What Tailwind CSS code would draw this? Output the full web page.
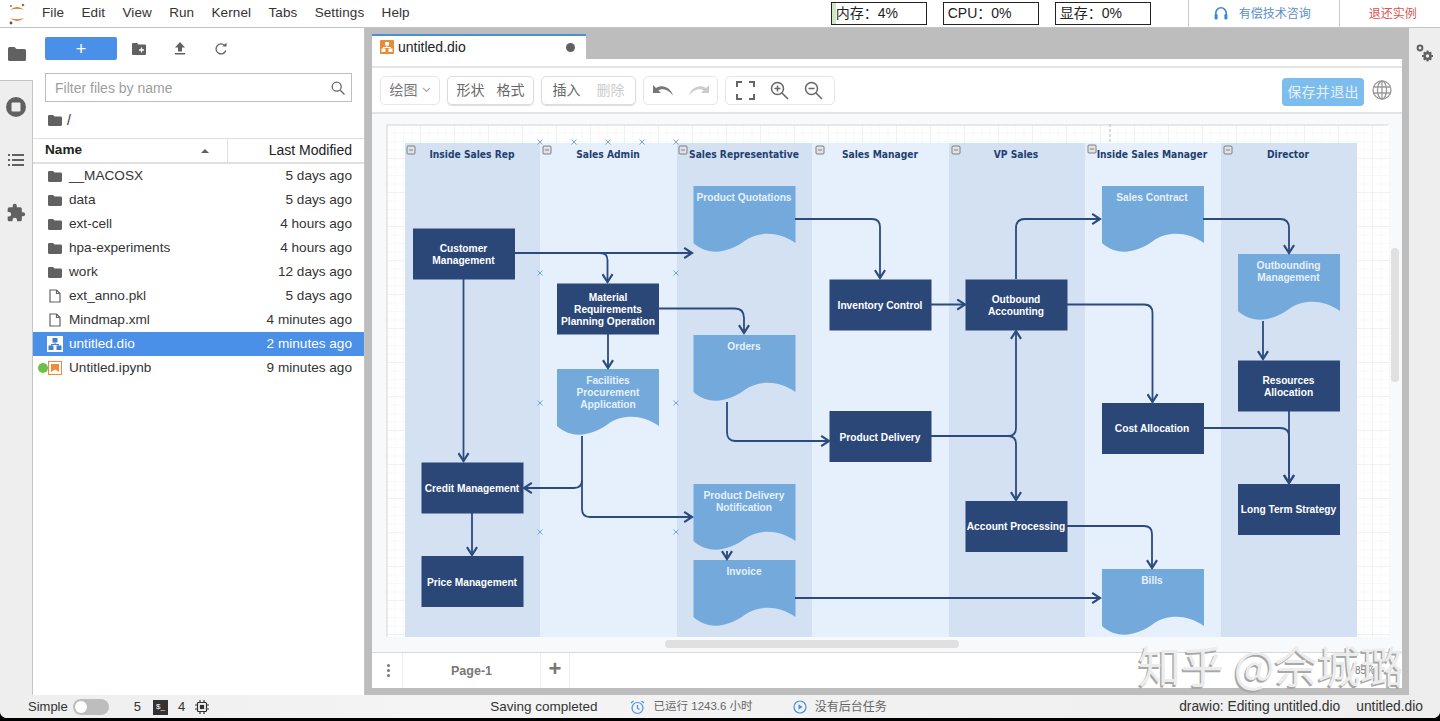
<!DOCTYPE html>
<html lang="en">
<head>
  <meta charset="UTF-8">
  <title>JupyterLab - untitled.dio</title>
  <script src="https://cdn.jsdelivr.net/npm/@tailwindcss/browser@4"></script>
</head>
<body class="bg-black">
<div class="w-[1440px] h-[718px] rounded-b-[7px] overflow-hidden relative flex flex-col bg-[#eeeeee] text-[#333] [font-family:'Liberation_Sans','Noto_Sans_CJK_SC',sans-serif]">

  <!-- top bar -->
  <header class="h-[28px] shrink-0 flex items-center bg-white border-b border-[#c4c4c4]">
    <div class="w-[33px] flex justify-center">
      <svg width="20" height="24" viewBox="0 0 20 24">
        <path d="M3 8 Q10 2 17 8 Q10 5.5 3 8Z" fill="#e8762b"/>
        <path d="M3 16 Q10 22 17 16 Q10 18.5 3 16Z" fill="#e8762b"/>
        <circle cx="16" cy="3" r="1.3" fill="#777"/><circle cx="4" cy="4" r="1" fill="#777"/><circle cx="4" cy="21" r="1.4" fill="#555"/>
      </svg>
    </div>
    <nav class="ml-[9px] flex gap-[17.3px] text-[13.5px] tracking-[0.1px]">
      <span>File</span><span>Edit</span><span>View</span><span>Run</span><span>Kernel</span><span>Tabs</span><span>Settings</span><span>Help</span>
    </nav>
    <div class="ml-[421px] flex gap-[16px] text-[14px] text-[#222]">
      <div class="w-[96px] h-[23px] border border-[#222] flex items-center bg-[linear-gradient(90deg,#cfe6c8_4%,#ffffff_4%)] pl-[4px]">内存：4%</div>
      <div class="w-[96px] h-[23px] border border-[#222] flex items-center pl-[4px]">CPU：0%</div>
      <div class="w-[96px] h-[23px] border border-[#222] flex items-center pl-[4px]">显存：0%</div>
    </div>
    <div class="ml-[37px] w-[152px] h-full border-l border-r border-[#ccc] flex items-center text-[12px] text-[#5b8fc9] pl-[25px] gap-[11px]">
      <svg width="14" height="15" viewBox="0 0 14 15" fill="none"><path d="M1.8 9V7a5.2 5.2 0 0 1 10.4 0v2" stroke="#3d86d8" stroke-width="1.6"/><rect x="0.6" y="8" width="3" height="5.5" rx="1.2" fill="#3d86d8"/><rect x="10.4" y="8" width="3" height="5.5" rx="1.2" fill="#3d86d8"/></svg>
      <span>有偿技术咨询</span>
    </div>
    <div class="flex-1 flex justify-center text-[12px] text-[#d9534f] pl-[6px]">退还实例</div>
  </header>

  <div class="flex-1 flex min-h-0">
    <!-- left icon rail -->
    <aside class="w-[33px] shrink-0 flex flex-col items-center">
      <div class="w-[33px] h-[52px] bg-white flex items-center justify-center">
        <svg width="18" height="14" viewBox="0 0 18 14"><path d="M0 1.5A1.5 1.5 0 0 1 1.5 0h5l2 2h8A1.5 1.5 0 0 1 18 3.5v9a1.5 1.5 0 0 1-1.5 1.5h-15A1.5 1.5 0 0 1 0 12.500Z" fill="#616161"/></svg>
      </div>
      <div class="w-[33px] flex-1 border-r border-[#c4c4c4] border-t flex flex-col items-center pt-[16px] gap-[36px]">
        <svg width="20" height="20" viewBox="0 0 20 20"><circle cx="10" cy="10" r="10" fill="#616161"/><rect x="5.500" y="5.500" width="9" height="9" rx="1" fill="#eee"/></svg>
        <svg width="16" height="14" viewBox="0 0 16 14" fill="#616161"><rect x="0" y="1" width="2" height="2"/><rect x="4" y="1" width="12" height="2"/><rect x="0" y="6" width="2" height="2"/><rect x="4" y="6" width="12" height="2"/><rect x="0" y="11" width="2" height="2"/><rect x="4" y="11" width="12" height="2"/></svg>
        <svg width="20" height="20" viewBox="0 0 24 24" fill="#616161"><path d="M20.500 11H19V7a2 2 0 0 0-2-2h-4V3.500a2.500 2.500 0 0 0-5 0V5H4a2 2 0 0 0-2 2v3.800h1.500a2.700 2.700 0 0 1 0 5.400H2V20a2 2 0 0 0 2 2h3.800v-1.500a2.700 2.700 0 0 1 5.400 0V22H17a2 2 0 0 0 2-2v-4h1.500a2.500 2.500 0 0 0 0-5Z"/></svg>
      </div>
    </aside>

    <!-- file browser -->
    <section class="w-[331px] shrink-0 bg-white flex flex-col text-[13.6px]">
      <div class="h-[32px] flex items-end pl-[12px]">
        <button class="w-[72px] h-[23px] rounded-[2px] bg-[#4a90e8] text-white text-[18px] leading-none flex items-center justify-center">+</button>
        <div class="h-[23px] flex items-center ml-[15px] gap-[28px]">
          <svg width="14" height="12" viewBox="0 0 14 12"><path d="M0 1a1 1 0 0 1 1-1h4l1.500 1.500H13a1 1 0 0 1 1 1V11a1 1 0 0 1-1 1H1a1 1 0 0 1-1-1Z" fill="#616161"/><path d="M9.500 4.500v5M7 7h5" stroke="#fff" stroke-width="1.300"/></svg>
          <svg width="12" height="13" viewBox="0 0 12 13" fill="#616161"><path d="M6 0 11 5.500H8V9.500H4V5.500H1Z"/><rect x="1" y="11" width="10" height="1.500"/></svg>
          <svg width="14" height="14" viewBox="0 0 14 14" fill="none"><path d="M11.800 8.500A5 5 0 1 1 10.500 3.300" stroke="#616161" stroke-width="1.300"/><path d="M8.500 4.500h4v-4Z" fill="#616161"/></svg>
        </div>
      </div>
      <div class="ml-[12px] mt-[13px] w-[307px] h-[29px] border border-[#bdbdbd] flex items-center justify-between pl-[9px] pr-[6px] pt-[1px] text-[14px] text-[#9e9e9e]">
        <span>Filter files by name</span>
        <svg width="14" height="14" viewBox="0 0 14 14" fill="none" stroke="#666" stroke-width="1.300"><circle cx="5.700" cy="5.700" r="4.500"/><path d="M9 9l4.500 4.500"/></svg>
      </div>
      <div class="h-[36px] flex items-center pl-[15px] gap-[5px] text-[14px]">
        <svg width="14" height="11" viewBox="0 0 18 14"><path d="M0 1.500A1.500 1.500 0 0 1 1.500 0h5l2 2h8A1.500 1.500 0 0 1 18 3.500v9a1.500 1.500 0 0 1-1.500 1.500h-15A1.500 1.500 0 0 1 0 12.500Z" fill="#616161"/></svg>
        <span>/</span>
      </div>
      <div class="h-[26px] flex border-t border-b-2 border-[#e0e0e0] font-bold text-[#222]">
        <div class="w-[195px] pl-[12px] pr-[18px] flex items-center justify-between border-r border-[#e0e0e0]">
          <span>Name</span>
          <span class="w-0 h-0 border-l-[4px] border-r-[4px] border-b-[4px] border-l-transparent border-r-transparent border-b-[#616161]"></span>
        </div>
        <div class="flex-1 flex items-center justify-end pr-[12px] font-normal text-[14px]">Last Modified</div>
      </div>

      <div class="flex items-center h-[24px] pr-[12px] pl-[15px]">
        <svg class="mr-[7px]" width="14" height="11" viewBox="0 0 18 14"><path d="M0 1.500A1.500 1.500 0 0 1 1.500 0h5l2 2h8A1.500 1.500 0 0 1 18 3.500v9a1.500 1.500 0 0 1-1.500 1.500h-15A1.500 1.500 0 0 1 0 12.500Z" fill="#616161"/></svg>
        <span class="flex-1">__MACOSX</span><span>5 days ago</span>
      </div>
      <div class="flex items-center h-[24px] pr-[12px] pl-[15px]">
        <svg class="mr-[7px]" width="14" height="11" viewBox="0 0 18 14"><path d="M0 1.500A1.500 1.500 0 0 1 1.500 0h5l2 2h8A1.500 1.500 0 0 1 18 3.500v9a1.500 1.500 0 0 1-1.500 1.500h-15A1.500 1.500 0 0 1 0 12.500Z" fill="#616161"/></svg>
        <span class="flex-1">data</span><span>5 days ago</span>
      </div>
      <div class="flex items-center h-[24px] pr-[12px] pl-[15px]">
        <svg class="mr-[7px]" width="14" height="11" viewBox="0 0 18 14"><path d="M0 1.500A1.500 1.500 0 0 1 1.500 0h5l2 2h8A1.500 1.500 0 0 1 18 3.500v9a1.500 1.500 0 0 1-1.500 1.500h-15A1.500 1.500 0 0 1 0 12.500Z" fill="#616161"/></svg>
        <span class="flex-1">ext-cell</span><span>4 hours ago</span>
      </div>
      <div class="flex items-center h-[24px] pr-[12px] pl-[15px]">
        <svg class="mr-[7px]" width="14" height="11" viewBox="0 0 18 14"><path d="M0 1.500A1.500 1.500 0 0 1 1.500 0h5l2 2h8A1.500 1.500 0 0 1 18 3.500v9a1.500 1.500 0 0 1-1.500 1.500h-15A1.500 1.500 0 0 1 0 12.500Z" fill="#616161"/></svg>
        <span class="flex-1">hpa-experiments</span><span>4 hours ago</span>
      </div>
      <div class="flex items-center h-[24px] pr-[12px] pl-[15px]">
        <svg class="mr-[7px]" width="14" height="11" viewBox="0 0 18 14"><path d="M0 1.500A1.500 1.500 0 0 1 1.500 0h5l2 2h8A1.500 1.500 0 0 1 18 3.500v9a1.500 1.500 0 0 1-1.500 1.500h-15A1.500 1.500 0 0 1 0 12.500Z" fill="#616161"/></svg>
        <span class="flex-1">work</span><span>12 days ago</span>
      </div>
      <div class="flex items-center h-[24px] pr-[12px] pl-[16px]">
        <svg class="mr-[8px]" width="12" height="14" viewBox="0 0 12 14" fill="none" stroke="#616161" stroke-width="1.200"><path d="M1 1h6.500L11 4.500V13H1Z"/><path d="M7.500 1v3.500H11"/></svg>
        <span class="flex-1">ext_anno.pkl</span><span>5 days ago</span>
      </div>
      <div class="flex items-center h-[24px] pr-[12px] pl-[16px]">
        <svg class="mr-[8px]" width="12" height="14" viewBox="0 0 12 14" fill="none" stroke="#616161" stroke-width="1.200"><path d="M1 1h6.500L11 4.500V13H1Z"/><path d="M7.500 1v3.500H11"/></svg>
        <span class="flex-1">Mindmap.xml</span><span>4 minutes ago</span>
      </div>
      <div class="flex items-center h-[24px] pr-[12px] pl-[14px] bg-[#4a90e8] text-white">
        <svg class="mr-[6px]" width="16" height="16" viewBox="0 0 16 16"><rect width="16" height="16" fill="#fff"/><g fill="#3f7fd0"><rect x="5.500" y="2" width="5" height="4.500"/><rect x="1.500" y="9.500" width="5" height="4.500"/><rect x="9.500" y="9.500" width="5" height="4.500"/><path d="M7.500 6.500h1V8H12v1.500h-1V9H5v.500H4V8h3.500Z"/></g></svg>
        <span class="flex-1">untitled.dio</span><span>2 minutes ago</span>
      </div>
      <div class="flex items-center h-[24px] pr-[12px] pl-[5px]">
        <span class="w-[10px] h-[10px] rounded-full bg-[#6cc04a]"></span>
        <svg class="mr-[7px]" width="14" height="14" viewBox="0 0 14 14"><rect x="0.500" y="0.500" width="13" height="13" fill="#fff" stroke="#ef8c3c"/><path d="M3 3h8v8L7 8.500 3 11Z" fill="#ef8c3c"/></svg>
        <span class="flex-1">Untitled.ipynb</span><span>9 minutes ago</span>
      </div>
    </section>

    <!-- dock panel -->
    <main class="flex-1 min-w-0 bg-[#bdbdbd] pl-[7px] pr-[7px] pb-[7px] border-l border-[#c4c4c4] flex flex-col">
      <div class="h-[31px] shrink-0 flex items-end">
        <div class="w-[214px] h-[25px] bg-white border-t-2 border-[#4a90d9] flex items-center pl-[8px] pr-[11px] pb-[1px] text-[14px] text-[#222]">
          <svg class="mr-[4px]" width="14" height="14" viewBox="0 0 14 14"><rect width="14" height="14" rx="1" fill="#e98a35"/><g fill="#fff"><rect x="5" y="2" width="4" height="3.500"/><rect x="1.500" y="8.500" width="4" height="3.500"/><rect x="8.500" y="8.500" width="4" height="3.500"/><path d="M6.500 5.500h1V7H11v1.500h-1V8H4v.500H3V7h3.500Z"/></g></svg>
          <span class="flex-1">untitled.dio</span>
          <span class="w-[9px] h-[9px] rounded-full bg-[#616161]"></span>
        </div>
      </div>
      <div class="flex-1 min-h-0 bg-white flex flex-col">
        <!-- drawio toolbar -->
        <div class="h-[48px] mt-[7px] shrink-0 border-t-2 border-b-2 border-[#e4e4e4] flex items-center pl-[8px] pr-[10px] text-[14px] text-[#666]">
          <div class="w-[60px] h-[29px] rounded-[5px] border border-[#e6e6e6] flex items-center justify-center gap-[4px] text-[#777]">绘图
            <svg width="9" height="6" viewBox="0 0 9 6" fill="none" stroke="#aaa" stroke-width="1.200"><path d="M1 1l3.500 3.500L8 1"/></svg>
          </div>
          <div class="ml-[7px] w-[87px] h-[29px] rounded-[5px] border border-[#dcdcdc] shadow-[0_1px_1px_#ddd] flex items-center justify-center gap-[12px]"><span>形状</span><span>格式</span></div>
          <div class="ml-[7px] w-[95px] h-[29px] rounded-[5px] border border-[#dcdcdc] shadow-[0_1px_1px_#ddd] flex items-center justify-center gap-[16px]"><span>插入</span><span class="text-[#ccc]">删除</span></div>
          <div class="ml-[7px] w-[75px] h-[29px] rounded-[5px] border border-[#e6e6e6] flex items-center justify-center gap-[14px]">
            <svg width="21" height="11" viewBox="0 0 21 11"><path d="M0 0v8h8L5.500 5.500C8 3.800 14 3 20 10.500 18 3 9.500-1.500 3 3Z" fill="#777"/></svg>
            <svg width="21" height="11" viewBox="0 0 21 11"><path d="M21 0v8h-8l2.500-2.500C13 3.800 7 3 1 10.500 3 3 11.500-1.500 18 3Z" fill="#ccc"/></svg>
          </div>
          <div class="ml-[7px] w-[110px] h-[29px] rounded-[5px] border border-[#e6e6e6] flex items-center pl-[10px] gap-[15px]">
            <svg width="19" height="19" viewBox="0 0 19 19" fill="none" stroke="#666" stroke-width="2"><path d="M1 6V1h5M13 1h5v5M18 13v5h-5M6 18H1v-5"/></svg>
            <svg width="19" height="19" viewBox="0 0 19 19" fill="none" stroke="#666" stroke-width="1.500"><circle cx="7.500" cy="7.500" r="6"/><path d="M12 12l6 6M7.500 4.500v6M4.500 7.500h6"/></svg>
            <svg width="19" height="19" viewBox="0 0 19 19" fill="none" stroke="#666" stroke-width="1.500"><circle cx="7.500" cy="7.500" r="6"/><path d="M12 12l6 6M4.500 7.500h6"/></svg>
          </div>
          <div class="ml-auto w-[82px] h-[28px] mt-[4px] rounded-[4px] bg-[#7dbdee] text-[#e4f1fb] flex items-center justify-center text-[14px] tracking-[0.300px]">保存并退出</div>
          <svg class="ml-[8px]" width="20" height="20" viewBox="0 0 20 20" fill="none" stroke="#999" stroke-width="1.300"><circle cx="10" cy="10" r="9"/><ellipse cx="10" cy="10" rx="4.500" ry="9"/><path d="M10 1v18M1.500 7h17M1.500 13h17"/></svg>
        </div>

        <!-- canvas -->
        <div class="flex-1 min-h-0 relative bg-[#f8f9fb] pl-[14px] pt-[10px] overflow-hidden">
          <svg width="1004" height="513" viewBox="386 124 1004 513" class="block [font-family:'Liberation_Sans',sans-serif]">
            <defs>
              <pattern id="minor" x="386" y="124" width="8.500" height="8.500" patternUnits="userSpaceOnUse"><path d="M8.500 0H0V8.500" fill="none" stroke="#f3f4f6" stroke-width="1"/></pattern>
              <pattern id="major" x="386" y="124" width="34" height="34" patternUnits="userSpaceOnUse"><path d="M34 0H0V34" fill="none" stroke="#e8e9ec" stroke-width="1"/></pattern>
              <path id="doc" d="M0 0H102V57C85 45 65 45 51 55C37 65 17 72 0 57Z" fill="#73a9db"/>
              <marker id="arr" viewBox="0 0 10 10" refX="8.500" refY="5" markerWidth="12" markerHeight="12" orient="auto" markerUnits="userSpaceOnUse"><path d="M2 0.800 8.500 5 2 9.200" fill="none" stroke="#2b4a7e" stroke-width="1.800"/></marker>
            </defs>
            <rect x="386" y="124" width="1004" height="513" fill="#fff"/>
            <rect x="386" y="124" width="1004" height="513" fill="url(#minor)"/>
            <rect x="386" y="124" width="1004" height="513" fill="url(#major)"/>
            <path d="M386 125H1388M387 124V637" stroke="#e4e4e4" stroke-width="1.500"/>
            <path d="M1110 124V143" stroke="#bbb" stroke-dasharray="3 2"/>

            <!-- swimlanes -->
            <rect x="405" y="143" width="135" height="494" fill="#d4e1f3"/>
            <rect x="540" y="143" width="137" height="494" fill="#e6effc"/>
            <rect x="677" y="143" width="135" height="494" fill="#d4e1f3"/>
            <rect x="812" y="143" width="137" height="494" fill="#e6effc"/>
            <rect x="949" y="143" width="136" height="494" fill="#d4e1f3"/>
            <rect x="1085" y="143" width="136" height="494" fill="#e6effc"/>
            <rect x="1221" y="143" width="136" height="494" fill="#d4e1f3"/>

            <g font-size="10.200" font-weight="700" fill="#233f70" text-anchor="middle" class="[font-family:'DejaVu_Sans_Condensed','DejaVu_Sans',sans-serif]">
              <text x="472" y="158">Inside Sales Rep</text>
              <text x="608" y="158">Sales Admin</text>
              <text x="744" y="158">Sales Representative</text>
              <text x="880" y="158">Sales Manager</text>
              <text x="1016" y="158">VP Sales</text>
              <text x="1152" y="158">Inside Sales Manager</text>
              <text x="1288" y="158">Director</text>
            </g>
            <g fill="#dfe3e8" stroke="#666" stroke-width="0.800">
              <rect x="407" y="146" width="8" height="8" rx="1"/><rect x="543" y="146" width="8" height="8" rx="1"/><rect x="679" y="146" width="8" height="8" rx="1"/><rect x="816" y="146" width="8" height="8" rx="1"/><rect x="952" y="146" width="8" height="8" rx="1"/><rect x="1088" y="145" width="8" height="8" rx="1"/><rect x="1224" y="146" width="8" height="8" rx="1"/>
              <path d="M409 150h4M545 150h4M681 150h4M818 150h4M954 150h4M1090 149h4M1226 150h4"/>
            </g>
            <path stroke="#6fa8dc" stroke-width="1" fill="none" d="M537.500 139.500l5 5m0-5l-5 5M571.500 139.500l5 5m0-5l-5 5M605.500 139.500l5 5m0-5l-5 5M639.500 139.500l5 5m0-5l-5 5M673.500 139.500l5 5m0-5l-5 5M537.500 270.500l5 5m0-5l-5 5M673.500 270.500l5 5m0-5l-5 5M537.500 400.500l5 5m0-5l-5 5M673.500 400.500l5 5m0-5l-5 5M537.500 529.500l5 5m0-5l-5 5M673.500 529.500l5 5m0-5l-5 5"/>

            <!-- documents -->
            <use href="#doc" x="693.500" y="186"/>
            <use href="#doc" x="693.500" y="335"/>
            <use href="#doc" x="557" y="369"/>
            <use href="#doc" x="693.500" y="484"/>
            <use href="#doc" x="693.500" y="560"/>
            <use href="#doc" x="1102" y="186"/>
            <use href="#doc" x="1238" y="254"/>
            <use href="#doc" x="1102" y="569"/>

            <!-- process boxes -->
            <g fill="#2a4778">
              <rect x="413" y="228.500" width="102" height="51"/>
              <rect x="557" y="283.500" width="102" height="51"/>
              <rect x="421.500" y="462.500" width="102" height="51"/>
              <rect x="421.500" y="556" width="102" height="51"/>
              <rect x="829.500" y="279.500" width="102" height="51"/>
              <rect x="829.500" y="411" width="102" height="51"/>
              <rect x="965.500" y="279.500" width="102" height="51"/>
              <rect x="965.500" y="501" width="102" height="51"/>
              <rect x="1102" y="403" width="102" height="51"/>
              <rect x="1238" y="360.500" width="102" height="51"/>
              <rect x="1238" y="484" width="102" height="51"/>
            </g>

            <!-- connectors -->
            <g fill="none" stroke="#2b4a7e" stroke-width="1.800" marker-end="url(#arr)">
              <path d="M515 253H692"/>
              <path d="M600 253Q607.500 253 607.500 260V282"/>
              <path d="M463.500 279V461"/>
              <path d="M608 334V368"/>
              <path d="M659 308.500H735Q744 308.500 744 318V333"/>
              <path d="M582 436V480Q582 488 574 488H524"/>
              <path d="M582 480V509Q582 517 590 517H692"/>
              <path d="M472 513V555"/>
              <path d="M727 551V559"/>
              <path d="M727 402V432Q727 441 735 441H829"/>
              <path d="M795 219H872Q880 219 880 227V278"/>
              <path d="M931 304.500H965"/>
              <path d="M931 436H1008Q1016 436 1016 428V331"/>
              <path d="M1008 436Q1016 436 1016 444V500"/>
              <path d="M1016 279V228Q1016 219 1025 219H1100"/>
              <path d="M1067 304.500H1144Q1152.500 304.500 1152.500 313V402"/>
              <path d="M1203 219H1280Q1289 219 1289 228V253"/>
              <path d="M1263 321V359"/>
              <path d="M1204 428H1280Q1289 428 1289 436V483"/>
              <path d="M1289 411V483"/>
              <path d="M1067 526H1144Q1152 526 1152 534V568"/>
              <path d="M795 598H1100"/>
            </g>

            <!-- labels -->
            <g font-size="10.200" font-weight="700" fill="#fff" text-anchor="middle">
              <text x="463.500" y="251.500">Customer</text><text x="463.500" y="263.500">Management</text>
              <text x="608" y="301">Material</text><text x="608" y="313">Requirements</text><text x="608" y="325">Planning Operation</text>
              <text x="472" y="492">Credit Management</text>
              <text x="472" y="585.500">Price Management</text>
              <text x="880" y="308.500">Inventory Control</text>
              <text x="880" y="440.500">Product Delivery</text>
              <text x="1016" y="302.500">Outbound</text><text x="1016" y="314.500">Accounting</text>
              <text x="1016" y="530">Account Processing</text>
              <text x="1152" y="432">Cost Allocation</text>
              <text x="1288.500" y="383.500">Resources</text><text x="1288.500" y="395.500">Allocation</text>
              <text x="1288.500" y="512.500">Long Term Strategy</text>
            </g>
            <g font-size="10.200" font-weight="700" fill="#e6f0fa" text-anchor="middle">
              <text x="744" y="200.500">Product Quotations</text>
              <text x="744" y="349.500">Orders</text>
              <text x="608" y="383.500">Facilities</text><text x="608" y="395.500">Procurement</text><text x="608" y="407.500">Application</text>
              <text x="744" y="498.500">Product Delivery</text><text x="744" y="510.500">Notification</text>
              <text x="744" y="574.500">Invoice</text>
              <text x="1152" y="200.500">Sales Contract</text>
              <text x="1288.500" y="268.500">Outbounding</text><text x="1288.500" y="280.500">Management</text>
              <text x="1152" y="583.500">Bills</text>
            </g>
          </svg>
          <!-- scrollbars -->
          <div class="absolute left-[293px] top-[526px] w-[294px] h-[8px] rounded-full bg-[#e0e0e0]"></div>
          <div class="absolute right-[3px] top-[134px] w-[8px] h-[134px] rounded-full bg-[#e0e0e0]"></div>
        </div>

        <!-- page tabs -->
        <div class="h-[36px] shrink-0 border-t border-[#d8d8d8] flex items-stretch text-[12.500px] font-bold text-[#777] relative">
          <div class="w-[31px] border-r border-[#eee] flex flex-col items-center justify-center gap-[2px] pl-[2px]">
            <span class="w-[3px] h-[3px] bg-[#777] rounded-full"></span><span class="w-[3px] h-[3px] bg-[#777] rounded-full"></span><span class="w-[3px] h-[3px] bg-[#777] rounded-full"></span>
          </div>
          <div class="w-[138px] border-r border-[#eee] flex items-center justify-center pt-[2px]">Page-1</div>
          <div class="w-[29px] border-r border-[#eee] flex items-center justify-center text-[22px] leading-none pb-[3px]">+</div>
          <div class="ml-auto mr-[27px] flex items-center text-[10px] font-normal text-[#777]">85%</div>
        </div>
      </div>
    </main>

    <!-- right rail -->
    <aside class="w-[31px] shrink-0 flex justify-center pt-[16px]">
      <svg width="18" height="19" viewBox="0 0 18 19" fill="#616161">
        <circle cx="4" cy="4" r="2.400" fill="none" stroke="#616161" stroke-width="2"/>
        <circle cx="11.500" cy="12" r="3" fill="none" stroke="#616161" stroke-width="2.600"/>
        <path stroke="#616161" stroke-width="2" d="M11.500 6.500v2.500M11.500 15v2.500M6 12h2.500M14.500 12H17M7.800 8.300l1.700 1.700M13.500 14l1.700 1.700M15.200 8.300 13.500 10M9.500 14l-1.700 1.700"/>
      </svg>
    </aside>
  </div>

  <!-- status bar -->
  <footer class="h-[23px] shrink-0 flex items-center pt-[1px] bg-[linear-gradient(90deg,#eeeeee,#f4f4f4_30%,#eeeeee)] text-[13px] text-[#333]">
    <span class="ml-[28px]">Simple</span>
    <span class="ml-[5px] w-[36px] h-[16px] rounded-full bg-[#bdbdbd] flex items-center pl-[1px]"><span class="w-[12px] h-[12px] ml-[1px] rounded-full bg-white"></span></span>
    <span class="ml-[25px]">5</span>
    <span class="ml-[12px] w-[15px] h-[15px] bg-[#333] text-white text-[8px] flex items-center justify-center">$_</span>
    <span class="ml-[10px]">4</span>
    <svg class="ml-[10px]" width="14" height="14" viewBox="0 0 14 14" fill="none" stroke="#333" stroke-width="1.200"><rect x="2.500" y="2.500" width="9" height="9" rx="1"/><rect x="5.500" y="5.500" width="3" height="3" fill="#333"/><path d="M5 0v2M9 0v2M5 12v2M9 12v2M0 5h2M0 9h2M12 5h2M12 9h2"/></svg>
    <span class="ml-[281px] text-[13.5px]">Saving completed</span>
    <svg class="ml-[32px]" width="15" height="15" viewBox="0 0 15 15" fill="none" stroke="#4a90d9" stroke-width="1.200"><circle cx="7.500" cy="8" r="5.500"/><path d="M7.500 5v3.200l2 1.300M1 3l2.500-2M14 3l-2.500-2"/></svg>
    <span class="ml-[9px] text-[11.500px] text-[#666]">已运行 1243.6 小时</span>
    <svg class="ml-[40px]" width="14" height="14" viewBox="0 0 14 14"><circle cx="7" cy="7" r="6" fill="none" stroke="#4a90d9" stroke-width="1.200"/><path d="M5.500 4.300 9.500 7l-4 2.700Z" fill="#4a90d9"/></svg>
    <span class="ml-[8px] text-[12px] text-[#666]">没有后台任务</span>
    <span class="ml-auto text-[13.8px]">drawio: Editing untitled.dio</span>
    <span class="ml-[16px] mr-[17px] text-[13.8px]">untitled.dio</span>
  </footer>

  <!-- watermark -->
  <div class="absolute left-[1138px] top-[636px] text-[43px] leading-[56px] whitespace-nowrap text-[#ececec] [text-shadow:-1.500px_1.500px_0_#a8a8a8] [font-family:'Noto_Sans_CJK_SC',sans-serif]">知乎 @佘城璐</div>
</div>
</body>
</html>
